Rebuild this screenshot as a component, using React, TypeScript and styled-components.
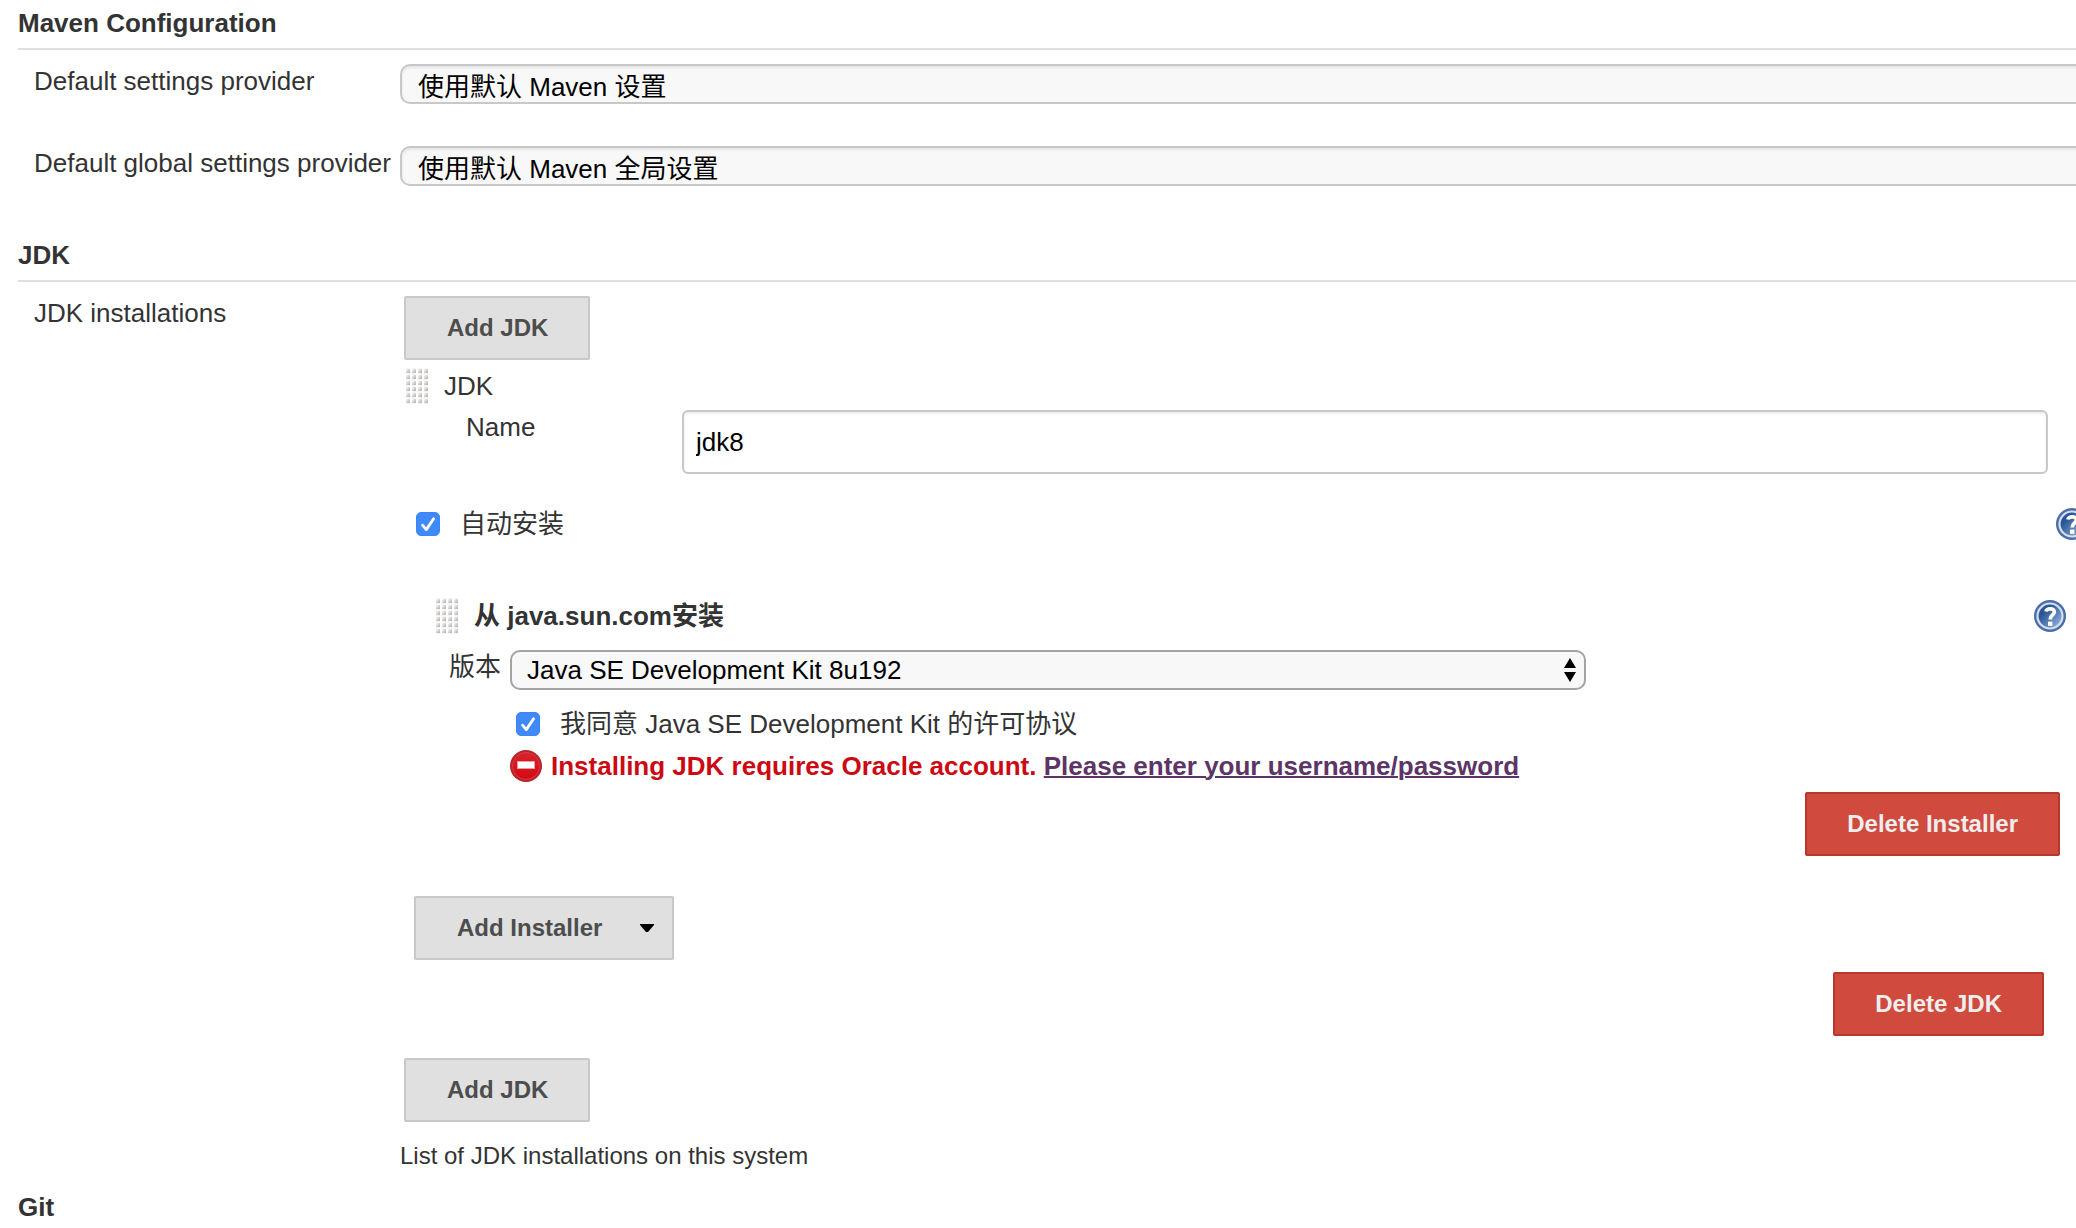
import React from "react";
import styled, { createGlobalStyle } from "styled-components";

const GlobalStyle = createGlobalStyle`
  *, *::before, *::after { box-sizing: border-box; }
  body {
    margin: 0;
    background: #fff;
    color: #333;
    font-family: "Liberation Sans", "Noto Sans CJK SC", sans-serif;
    font-size: 26px;
    line-height: 30px;
    overflow-x: hidden;
  }
`;

const Page = styled.main`
  padding: 8px 0 0 18px;
  overflow: hidden;
`;

const Section = styled.section<{ $gap?: number }>`
  margin-top: ${({ $gap = 0 }) => $gap}px;
`;

const SectionTitle = styled.h2<{ $ruled?: boolean }>`
  margin: 0;
  font-size: 26px;
  line-height: 30px;
  font-weight: bold;
  ${({ $ruled }) => $ruled && "padding-bottom: 10px; border-bottom: 2px solid #e0e0e0;"}
`;

const SettingRow = styled.div<{ $gap: number }>`
  display: grid;
  grid-template-columns: 382px minmax(0, 1fr);
  margin-top: ${({ $gap }) => $gap}px;
`;

const SettingLabel = styled.label`
  padding: 2px 0 0 16px;
  white-space: nowrap;
`;

const SettingCaption = styled.div`
  padding: 2px 0 0 16px;
`;

const ProviderSelect = styled.select`
  appearance: none;
  width: calc(100% + 40px);
  height: 40px;
  margin: 0;
  padding: 6px 16px 0;
  border: 2px solid #c8c8c8;
  border-radius: 10px;
  background: #f8f8f8;
  box-shadow: inset 0 2px 3px rgba(0, 0, 0, 0.08);
  color: #000;
  font: inherit;
`;

const Stack = styled.div`
  display: flex;
  flex-direction: column;
`;

const ButtonRow = styled.div<{ $top?: number; $left?: number; $right?: number; $end?: boolean }>`
  display: flex;
  justify-content: ${({ $end }) => ($end ? "flex-end" : "flex-start")};
  margin-top: ${({ $top = 0 }) => $top}px;
  padding-left: ${({ $left = 0 }) => $left}px;
  padding-right: ${({ $right = 0 }) => $right}px;
`;

const Button = styled.button<{ $danger?: boolean; $menu?: boolean }>`
  display: flex;
  align-items: center;
  gap: 38px;
  height: 64px;
  padding: 0 ${({ $menu }) => ($menu ? 18 : 40)}px 0 ${({ $danger }) => ($danger ? 40 : 41)}px;
  border: 2px solid ${({ $danger }) => ($danger ? "#b8362c" : "#c8c8c8")};
  border-radius: 2px;
  background: ${({ $danger }) => ($danger ? "#d04a3e" : "#e0e0e0")};
  color: ${({ $danger }) => ($danger ? "#eee" : "#4d4d4d")};
  font-family: inherit;
  font-size: 24px;
  line-height: 28px;
  font-weight: bold;
  white-space: nowrap;
`;

const BlockHeader = styled.div<{ $top: number; $left: number; $right?: number }>`
  display: flex;
  align-items: center;
  gap: 16px;
  height: 36px;
  margin-top: ${({ $top }) => $top}px;
  padding: 0 ${({ $right = 0 }) => $right}px 0 ${({ $left }) => $left}px;

  svg { flex: none; }
  a { margin-left: auto; }
`;

const NameRow = styled.div`
  display: grid;
  grid-template-columns: 216px minmax(0, 1fr);
  margin-top: 6px;
  padding: 0 28px 0 66px;
`;

const TopLabel = styled.label`
  padding-top: 2px;
`;

const TextInput = styled.input`
  width: 100%;
  height: 64px;
  padding: 0 12px;
  border: 2px solid #c8c8c8;
  border-radius: 6px;
  background: #fff;
  box-shadow: inset 0 2px 3px rgba(0, 0, 0, 0.08);
  color: #000;
  font: inherit;
`;

const CheckRow = styled.div<{ $top: number; $left: number; $right?: number }>`
  display: flex;
  align-items: center;
  gap: 20px;
  height: 32px;
  margin-top: ${({ $top }) => $top}px;
  margin-right: ${({ $right = 0 }) => $right}px;
  padding-left: ${({ $left }) => $left}px;

  a { margin-left: auto; }
`;

const CheckBoxFrame = styled.span`
  display: grid;
  flex: none;
  width: 24px;
  height: 24px;

  input, svg { grid-area: 1 / 1; }
  svg { pointer-events: none; visibility: hidden; }
  input:checked + svg { visibility: visible; }
`;

const CheckInput = styled.input`
  appearance: none;
  width: 24px;
  height: 24px;
  margin: 0;
  border: 1px solid #b5b5b5;
  border-radius: 5px;
  background: #fff;

  &:checked {
    border-color: #3b86f7;
    background: #3f89f8;
  }
`;

const VersionRow = styled.div`
  display: flex;
  gap: 9px;
  margin-top: 16px;
  padding: 0 16px 0 49px;
`;

const VersionSelectFrame = styled.span`
  display: grid;
  flex: 0 1 1076px;
  align-items: center;

  select, svg { grid-area: 1 / 1; }
  svg { justify-self: end; margin-right: 10px; pointer-events: none; }
`;

const VersionSelect = styled.select`
  appearance: none;
  width: 100%;
  height: 40px;
  margin: 0;
  padding: 0 32px 0 15px;
  border: 2px solid #a3a3a3;
  border-radius: 10px;
  background: #f8f8f8;
  color: #000;
  font: inherit;
`;

const ErrorMessage = styled.div`
  display: flex;
  align-items: center;
  gap: 9px;
  height: 32px;
  margin-top: 10px;
  padding-left: 110px;
  color: #cc0a14;
  font-weight: bold;

  svg { flex: none; }
`;

const AccountLink = styled.a`
  color: #5c3566;
  text-decoration: underline;
  text-decoration-thickness: 2px;
`;

const HelpLink = styled.a`
  display: block;
  flex: none;
  width: 32px;
  height: 32px;

  svg { display: block; }
`;

const Description = styled.p`
  margin: 20px 0 0;
  font-size: 24px;
  line-height: 28px;
`;

function Grip({ id }: { id: string }) {
  return (
    <svg width="22" height="36" viewBox="0 0 22 36" aria-hidden="true">
      <defs>
        <linearGradient id={`${id}-dot`} x1="0" y1="0" x2="1" y2="1">
          <stop offset="0.1" stopColor="#f4f3f2" />
          <stop offset="1" stopColor="#aeaca8" />
        </linearGradient>
        <pattern id={id} width="6" height="6" patternUnits="userSpaceOnUse">
          <rect width="4" height="6" fill="#f6f5f4" />
          <rect y="1" width="4" height="4" fill={`url(#${id}-dot)`} />
        </pattern>
      </defs>
      <rect width="22" height="36" fill={`url(#${id})`} />
    </svg>
  );
}

function Help({ id, topic }: { id: string; topic: string }) {
  return (
    <HelpLink href="#help" aria-label={`Help: ${topic}`}>
      <svg width="32" height="32" viewBox="0 0 32 32" aria-hidden="true">
        <defs>
          <linearGradient id={id} x1="0.1" y1="0.2" x2="0.9" y2="0.9">
            <stop offset="0.2" stopColor="#2b5594" />
            <stop offset="1" stopColor="#8fb2dc" />
          </linearGradient>
        </defs>
        <circle cx="16" cy="16" r="16" fill="#4a6fa8" />
        <circle cx="16" cy="16" r="12.5" fill={`url(#${id})`} stroke="#d3dfef" strokeWidth="2.2" />
        <path
          d="M12 11.5C12.5 8.4 20.3 7.4 20.3 12C20.3 15.2 16.2 14.8 16.2 19.6"
          fill="none"
          stroke="#fff"
          strokeWidth="3.8"
        />
        <rect x="14" y="21.6" width="4.4" height="4.2" fill="#fff" />
      </svg>
    </HelpLink>
  );
}

function CheckBox({ id }: { id: string }) {
  return (
    <CheckBoxFrame>
      <CheckInput type="checkbox" id={id} defaultChecked />
      <svg width="24" height="24" viewBox="0 0 24 24" aria-hidden="true">
        <path
          d="M6.5 13.2L10.3 17.6L17.6 6.8"
          fill="none"
          stroke="#fff"
          strokeWidth="2.8"
          strokeLinecap="round"
          strokeLinejoin="round"
        />
      </svg>
    </CheckBoxFrame>
  );
}

function StopIcon() {
  return (
    <svg width="32" height="32" viewBox="0 0 32 32" aria-hidden="true">
      <defs>
        <linearGradient id="stop-fill" x1="0" y1="0" x2="0" y2="1">
          <stop offset="0" stopColor="#d8232b" />
          <stop offset="1" stopColor="#d20a14" />
        </linearGradient>
      </defs>
      <circle cx="16" cy="16" r="16" fill="#b5252a" />
      <circle cx="16" cy="16" r="13.5" fill="url(#stop-fill)" stroke="#dc3a40" strokeWidth="1" />
      <rect x="7" y="11" width="18" height="8" fill="#ee9a9a" />
      <rect x="8" y="12" width="16" height="6" fill="#fff" />
    </svg>
  );
}

export default function App() {
  return (
    <>
      <GlobalStyle />
      <Page>
        <Section>
          <SectionTitle $ruled>Maven Configuration</SectionTitle>
          <SettingRow $gap={14}>
            <SettingLabel htmlFor="settings">Default settings provider</SettingLabel>
            <ProviderSelect id="settings">
              <option>使用默认 Maven 设置</option>
            </ProviderSelect>
          </SettingRow>
          <SettingRow $gap={42}>
            <SettingLabel htmlFor="global-settings">Default global settings provider</SettingLabel>
            <ProviderSelect id="global-settings">
              <option>使用默认 Maven 全局设置</option>
            </ProviderSelect>
          </SettingRow>
        </Section>

        <Section $gap={54}>
          <SectionTitle $ruled>JDK</SectionTitle>
          <SettingRow $gap={14}>
            <SettingCaption>JDK installations</SettingCaption>
            <Stack>
              <ButtonRow $left={4}>
                <Button type="button">Add JDK</Button>
              </ButtonRow>

              <BlockHeader $top={8} $left={6}>
                <Grip id="grip-jdk" />
                <span>JDK</span>
              </BlockHeader>
              <NameRow>
                <TopLabel htmlFor="jdk-name">Name</TopLabel>
                <TextInput id="jdk-name" type="text" defaultValue="jdk8" />
              </NameRow>
              <CheckRow $top={34} $left={16} $right={-12}>
                <CheckBox id="auto-install" />
                <label htmlFor="auto-install">自动安装</label>
                <Help id="help-auto" topic="自动安装" />
              </CheckRow>

              <BlockHeader $top={58} $left={36} $right={10}>
                <Grip id="grip-installer" />
                <strong>从 java.sun.com安装</strong>
                <Help id="help-installer" topic="java.sun.com" />
              </BlockHeader>
              <VersionRow>
                <TopLabel htmlFor="version">版本</TopLabel>
                <VersionSelectFrame>
                  <VersionSelect id="version">
                    <option>Java SE Development Kit 8u192</option>
                  </VersionSelect>
                  <svg width="12" height="24" viewBox="0 0 12 24" aria-hidden="true">
                    <path d="M6 0L12 10H0ZM6 24L0 14H12Z" fill="#000" />
                  </svg>
                </VersionSelectFrame>
              </VersionRow>
              <CheckRow $top={18} $left={116}>
                <CheckBox id="license" />
                <label htmlFor="license">我同意 Java SE Development Kit 的许可协议</label>
              </CheckRow>
              <ErrorMessage>
                <StopIcon />
                <span>
                  Installing JDK requires Oracle account.{" "}
                  <AccountLink href="#account">Please enter your username/password</AccountLink>
                </span>
              </ErrorMessage>
              <ButtonRow $top={10} $right={16} $end>
                <Button type="button" $danger>Delete Installer</Button>
              </ButtonRow>

              <ButtonRow $top={40} $left={14}>
                <Button type="button" $menu>
                  Add Installer
                  <svg width="14" height="8" viewBox="0 0 14 8" aria-hidden="true">
                    <path d="M0 0H14V1L8 8H6L0 1Z" fill="#000" />
                  </svg>
                </Button>
              </ButtonRow>
              <ButtonRow $top={12} $right={32} $end>
                <Button type="button" $danger>Delete JDK</Button>
              </ButtonRow>
              <ButtonRow $top={22} $left={4}>
                <Button type="button">Add JDK</Button>
              </ButtonRow>
              <Description>List of JDK installations on this system</Description>
            </Stack>
          </SettingRow>
        </Section>

        <Section $gap={22}>
          <SectionTitle>Git</SectionTitle>
        </Section>
      </Page>
    </>
  );
}
